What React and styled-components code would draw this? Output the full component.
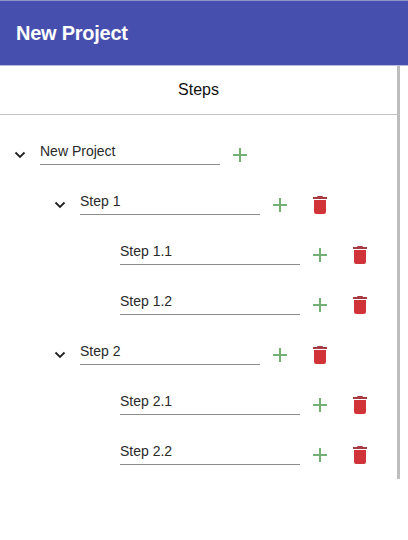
import React from 'react';
import styled, { createGlobalStyle } from 'styled-components';

const Global = createGlobalStyle`
  html, body { margin: 0; padding: 0; background: #fff; }
  body { font-family: "Liberation Sans", Arial, sans-serif; overflow: hidden; }
`;
const Page = styled.div`
  width: 408px;
  height: 540px;
  overflow: hidden;
  background: #fff;
`;
const Header = styled.header`
  height: 66px;
  box-sizing: border-box;
  border-top: 1px solid #8f94c9;
  border-bottom: 1px solid #b9bbdd;
  background: #474fae;
  display: flex;
  align-items: center;
  padding: 0 16px;
  color: #fff;
  font-size: 20px;
  font-weight: 700;
  letter-spacing: -0.25px;
`;
const Panel = styled.section`
  width: 400px;
  height: 413px;
  box-sizing: border-box;
  border-right: 3px solid #bdbdbd;
`;
const PanelTitle = styled.div`
  height: 49px;
  box-sizing: border-box;
  border-bottom: 1px solid #c4c4c4;
  display: flex;
  align-items: center;
  justify-content: center;
  font-size: 16px;
  color: #111;
`;
const Tree = styled.div`
  padding-top: 15px;
  display: flex;
  flex-direction: column;
`;
const Row = styled.div`
  height: 50px;
  display: flex;
  align-items: center;
  padding-left: ${p => p.$level * 40}px;
`;
const Toggle = styled.span`
  width: 40px;
  height: 40px;
  flex: none;
  display: flex;
  align-items: center;
  justify-content: center;
`;
const Field = styled.div`
  width: 180px;
  height: 25px;
  flex: none;
  align-self: flex-start;
  margin-top: 10px;
  box-sizing: border-box;
  border-bottom: 1px solid #8c8c8c;
  font-size: 14px;
  line-height: 22px;
  color: #2a2a2a;
`;
const IconButton = styled.span`
  width: 40px;
  height: 40px;
  flex: none;
  display: flex;
  align-items: center;
  justify-content: center;
`;

const Chevron = () => (
  <svg width="12" height="8" viewBox="0 0 12 8" fill="none">
    <path d="M1.500 1.500 L6 6 L10.500 1.500" stroke="#222" strokeWidth="1.800" />
  </svg>
);
const Plus = () => (
  <svg width="14" height="14" viewBox="0 0 14 14">
    <path d="M6 0h2v6h6v2H8v6H6V8H0V6h6z" fill="#74b074" />
  </svg>
);
const Trash = () => (
  <svg width="14" height="18" viewBox="0 0 14 18">
    <path d="M4.500 0h5l.5 1h4v2H0V1h4z" fill="#a83a44" />
    <path d="M1 4h12v11.800a2.200 2.200 0 0 1-2.200 2.200H3.200a2.200 2.200 0 0 1-2.200-2.200z" fill="#d13438" />
  </svg>
);

const steps = [
  { label: 'New Project', level: 0, toggle: true, root: true },
  { label: 'Step 1', level: 1, toggle: true },
  { label: 'Step 1.1', level: 2 },
  { label: 'Step 1.2', level: 2 },
  { label: 'Step 2', level: 1, toggle: true },
  { label: 'Step 2.1', level: 2 },
  { label: 'Step 2.2', level: 2 },
];

export default function App() {
  return (
    <Page>
      <Global />
      <Header>New Project</Header>
      <Panel>
        <PanelTitle>Steps</PanelTitle>
        <Tree>
          {steps.map(s => (
            <Row key={s.label} $level={s.level}>
              <Toggle>{s.toggle && <Chevron />}</Toggle>
              <Field>{s.label}</Field>
              <IconButton><Plus /></IconButton>
              {!s.root && <IconButton><Trash /></IconButton>}
            </Row>
          ))}
        </Tree>
      </Panel>
    </Page>
  );
}
